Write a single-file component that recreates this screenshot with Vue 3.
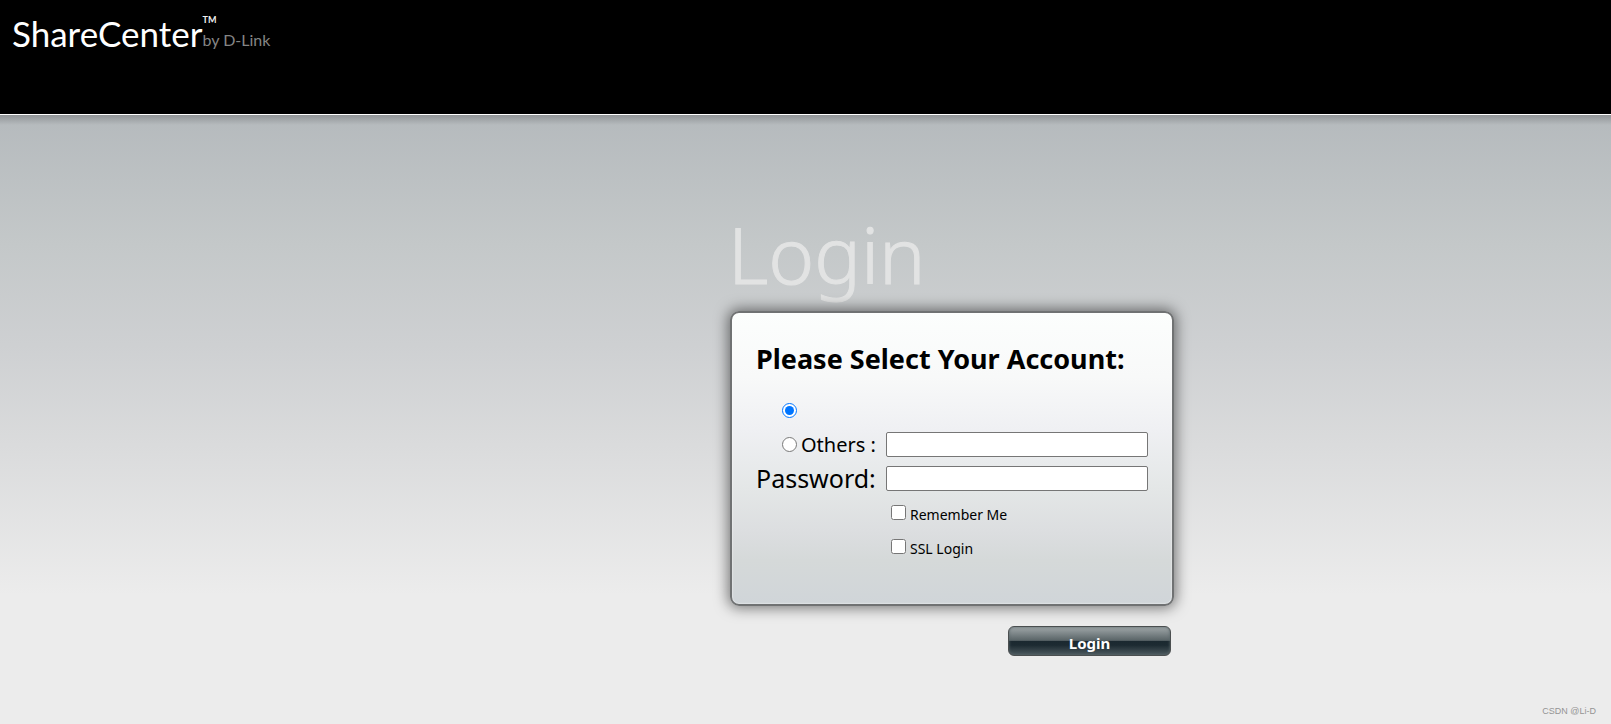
<script setup>
import { ref } from 'vue'

const account = ref('default')
const userName = ref('')
const password = ref('')
const remember = ref(false)
const ssl = ref(false)
</script>

<template>
  <div class="page">
    <header class="top">
      <div class="logo">
        <span class="brand">ShareCenter</span>
        <span class="side"><sup class="tm">TM</sup><span class="by">by D-Link</span></span>
      </div>
    </header>

    <main class="body">
      <form class="login" @submit.prevent>
        <h1 class="title">Login</h1>
        <section class="card">
          <h2 class="heading">Please Select Your Account:</h2>
          <div class="row pick">
            <input v-model="account" type="radio" name="account" value="default" aria-label="Default account" />
          </div>
          <div class="row">
            <div class="label pick">
              <input id="others" v-model="account" type="radio" name="account" value="others" />
              <label for="others" class="others">Others :</label>
            </div>
            <input v-model="userName" class="field" type="text" aria-label="User name" />
          </div>
          <div class="row">
            <label for="password" class="label pass">Password:</label>
            <input id="password" v-model="password" class="field" type="password" />
          </div>
          <label class="row option"><input v-model="remember" type="checkbox" /><span>Remember Me</span></label>
          <label class="row option"><input v-model="ssl" type="checkbox" /><span>SSL Login</span></label>
        </section>
        <button class="submit" type="submit">Login</button>
      </form>
    </main>

    <footer class="credit">CSDN @Li-D</footer>
  </div>
</template>

<style>
body {
  margin: 0;
  background: #ececec;
}
</style>

<style scoped>
.page {
  min-height: 100vh;
  display: flex;
  flex-direction: column;
  color: #000;
  font-family: Tahoma, "Noto Sans", "Open Sans", sans-serif;
}
.top {
  box-sizing: border-box;
  height: 115px;
  padding: 8px 12px;
  background: #000;
  border-bottom: 1px solid #fff;
}
.logo {
  display: flex;
  font-family: Lato, sans-serif;
}
.brand {
  font-size: 35px;
  line-height: 50px;
  color: #fff;
}
.side {
  display: flex;
  flex-direction: column;
}
.tm {
  font-size: 9px;
  font-weight: 700;
  line-height: 24px;
  height: 20px;
  color: #eee;
}
.by {
  font-size: 16px;
  line-height: 24px;
  color: #858585;
}
.body {
  flex: 1;
  box-sizing: border-box;
  padding: 90px 24px 0;
  background:
    linear-gradient(rgba(0, 0, 0, 0.2), rgba(0, 0, 0, 0) 10px),
    linear-gradient(#b5babd, #c4c8c9 130px, #ced0d2 230px, #dadbdc 330px, #ececec 480px);
}
.login {
  max-width: 737px;
  margin: 0 auto;
  display: flex;
  flex-direction: column;
  align-items: flex-end;
}
.title {
  width: 446px;
  height: 106px;
  margin: 0;
  font-family: "Noto Sans", sans-serif;
  font-size: 78px;
  font-weight: 300;
  line-height: 98px;
  color: #e2e3e3;
  -webkit-text-stroke: 1px #e2e3e3;
}
.card {
  box-sizing: border-box;
  width: 444px;
  padding: 24px 24px 41px;
  border: 2px solid #707273;
  border-radius: 9px;
  background: linear-gradient(#fcfefd, #f8f9f9 22%, #eff0f3 40%, #e4e7e7 60%, #dcdee0 75%, #d5d9d9 85%, #d0d5d9);
  box-shadow: 0 0 14px 2px rgba(0, 0, 0, 0.5), inset 0 0 2px #fff;
}
.heading {
  margin: 0 0 12px;
  font-size: 27px;
  line-height: 44px;
  white-space: nowrap;
}
.row {
  display: flex;
  align-items: center;
  height: 34px;
}
.pick {
  display: flex;
  align-items: center;
  gap: 4px;
  padding-left: 26px;
}
input[type="radio"],
input[type="checkbox"] {
  width: 15px;
  height: 15px;
  margin: 0;
}
.label {
  box-sizing: border-box;
  width: 130px;
  flex: none;
  white-space: nowrap;
}
.others {
  font-size: 20px;
}
.pass {
  font-size: 25px;
}
.field {
  box-sizing: border-box;
  flex: 1;
  min-width: 0;
  height: 25px;
  border: 1px solid #767676;
  border-radius: 2px;
  background: #fff;
  font-size: 16px;
}
.option {
  gap: 4px;
  padding-left: 135px;
  font-size: 14px;
}
.option span {
  padding-top: 5px;
}
.submit {
  width: 163px;
  height: 30px;
  margin: 20px 3px 0 0;
  padding: 4px 0 0;
  border: 1px solid #4b4f50;
  border-radius: 6px;
  background: linear-gradient(#a0a7a9, #596467 48%, #1b2930 50%, #1d2b32 65%, #4c595e);
  box-shadow: inset 0 0 3px #59666a;
  color: #fff;
  font-family: inherit;
  font-size: 15px;
  font-weight: 700;
  line-height: 20px;
}
.credit {
  padding: 0 15px 6px;
  background: #ececec;
  color: #949494;
  font-family: "Liberation Sans", Arial, sans-serif;
  font-size: 9px;
  line-height: 14px;
  text-align: right;
}
</style>
